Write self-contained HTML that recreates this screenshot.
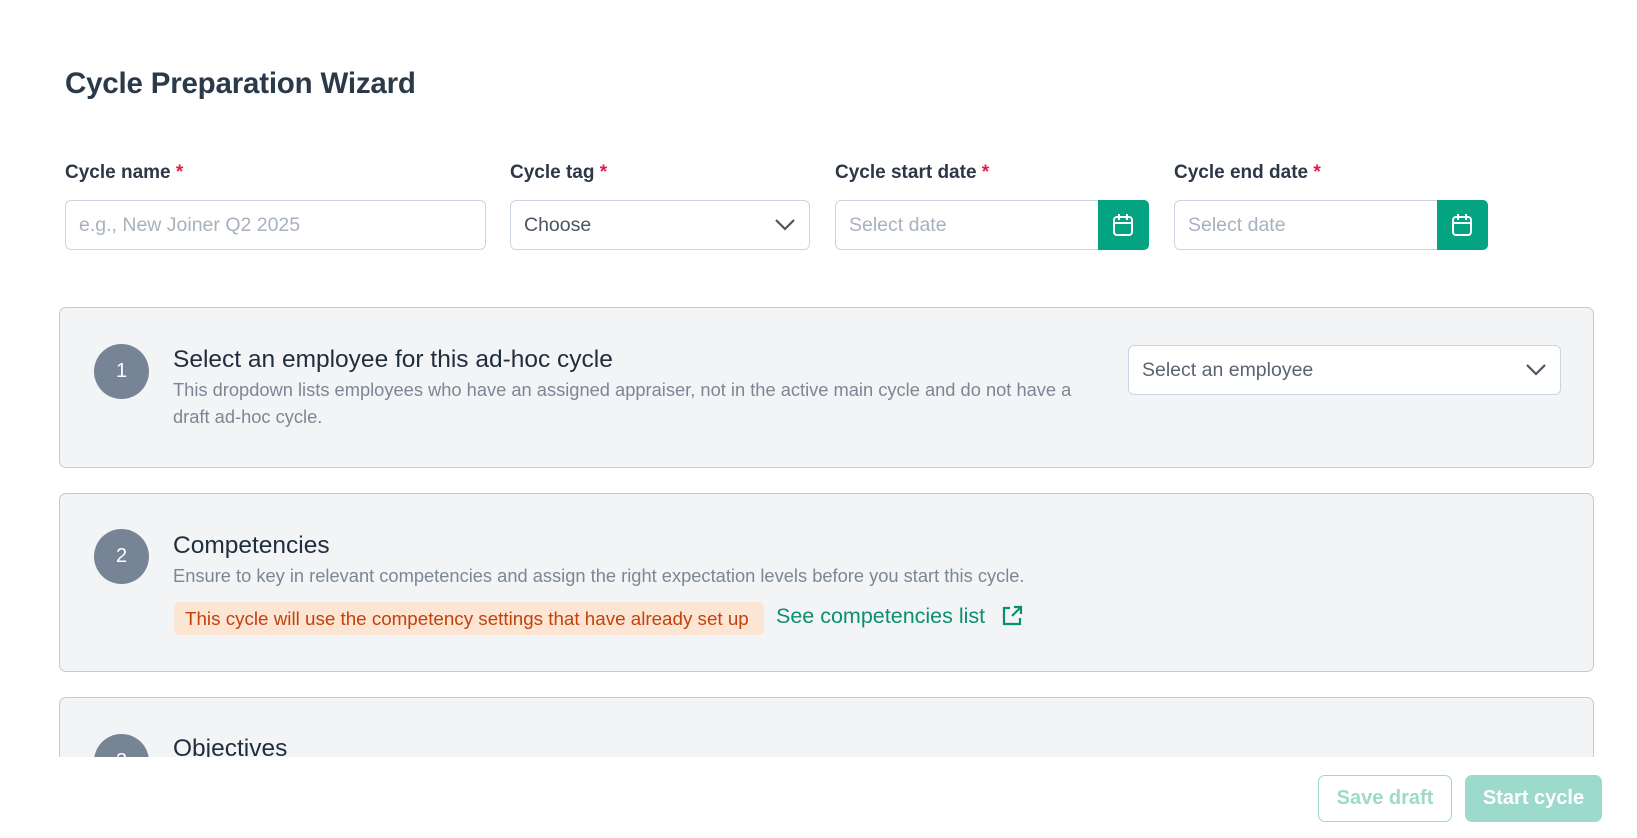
<!DOCTYPE html>
<html><head><meta charset="utf-8"><style>
*{box-sizing:border-box;margin:0;padding:0}
body{width:1637px;height:838px;overflow:hidden;background:#fff;font-family:"Liberation Sans",sans-serif;position:relative;color:#2d3748}
.abs{position:absolute}
h1{position:absolute;left:65px;top:67px;font-size:29.5px;font-weight:bold;color:#2b3a4a;letter-spacing:-0.2px}
.lbl{position:absolute;top:162px;font-size:19px;font-weight:bold;color:#2d3748}
.lbl span{color:#e11d48}
.inp{position:absolute;top:200px;height:50px;border:1px solid #cbd5e1;border-radius:6px;background:#fff;font-size:19.5px;color:#a7b1bf;padding-left:13px;line-height:48px}
.cal{position:absolute;top:200px;height:50px;width:51px;background:#04a381;border-radius:0 5px 5px 0}
.card{position:absolute;left:59px;width:1535px;background:#f3f4f6;border:1px solid #c3cbd6;border-radius:7px}
.circ{position:absolute;left:94px;width:55px;height:55px;border-radius:50%;background:#768496;color:#fff;font-size:20px;text-align:center;line-height:55px}
.ct{position:absolute;left:173px;font-size:24.5px;color:#1f2d3d}
.cd{position:absolute;left:173px;font-size:18.3px;color:#7b8794;line-height:27px}
.chev{position:absolute}
</style></head><body>
<h1>Cycle Preparation Wizard</h1>
<div class="lbl" style="left:65px">Cycle name <span>*</span></div>
<div class="lbl" style="left:510px">Cycle tag <span>*</span></div>
<div class="lbl" style="left:835px">Cycle start date <span>*</span></div>
<div class="lbl" style="left:1174px">Cycle end date <span>*</span></div>
<div class="inp" style="left:65px;width:421px">e.g., New Joiner Q2 2025</div>
<div class="inp" style="left:510px;width:300px;color:#4a5563">Choose</div>
<svg class="chev" style="left:774px;top:218px" width="22" height="14" viewBox="0 0 22 14"><path d="M2 2l9 9 9-9" fill="none" stroke="#4a5563" stroke-width="2.2"/></svg>
<div class="inp" style="left:835px;width:314px">Select date</div>
<div class="cal" style="left:1098px"></div>
<div class="inp" style="left:1174px;width:314px">Select date</div>
<div class="cal" style="left:1437px"></div>
<svg class="abs" style="left:1112px;top:213px" width="22" height="24" viewBox="0 0 22 24"><rect x="2" y="4" width="18" height="18" rx="3" fill="none" stroke="#fff" stroke-width="2"/><path d="M2 10h18M7 1v6M15 1v6" stroke="#fff" stroke-width="2"/></svg>
<svg class="abs" style="left:1451px;top:213px" width="22" height="24" viewBox="0 0 22 24"><rect x="2" y="4" width="18" height="18" rx="3" fill="none" stroke="#fff" stroke-width="2"/><path d="M2 10h18M7 1v6M15 1v6" stroke="#fff" stroke-width="2"/></svg>

<div class="card" style="top:307px;height:161px"></div>
<div class="circ" style="top:344px">1</div>
<div class="ct" style="top:346px">Select an employee for this ad-hoc cycle</div>
<div class="cd" style="top:376px;width:915px">This dropdown lists employees who have an assigned appraiser, not in the active main cycle and do not have a draft ad-hoc cycle.</div>
<div class="inp" style="left:1128px;top:345px;width:433px;color:#5a6472">Select an employee</div>
<svg class="chev" style="left:1525px;top:363px" width="22" height="14" viewBox="0 0 22 14"><path d="M2 2l9 9 9-9" fill="none" stroke="#4a5563" stroke-width="2.2"/></svg>

<div class="card" style="top:493px;height:179px"></div>
<div class="circ" style="top:529px">2</div>
<div class="ct" style="top:532px">Competencies</div>
<div class="cd" style="top:562px">Ensure to key in relevant competencies and assign the right expectation levels before you start this cycle.</div>
<div class="abs" style="left:174px;top:602px;width:590px;height:33px;background:#fde5d4;border-radius:5px;color:#c2410c;font-size:18.8px;line-height:33px;padding-left:11px;white-space:nowrap">This cycle will use the competency settings that have already set up</div>
<div class="abs" style="left:776px;top:604px;font-size:21.5px;color:#0a8f6f">See competencies list</div>
<svg class="abs" style="left:1001px;top:605px" width="22" height="22" viewBox="0 0 22 22"><path d="M9 3H3v16h16v-6M13 2h7v7M20 2l-9 9" fill="none" stroke="#0a8f6f" stroke-width="2.2"/></svg>

<div class="card" style="top:697px;height:120px"></div>
<div class="circ" style="top:734px">3</div>
<div class="ct" style="top:735px">Objectives</div>
<div class="abs" style="left:0;top:757px;width:1637px;height:81px;background:#fff"></div>
<div class="abs" style="left:1318px;top:775px;width:134px;height:47px;border:1px solid #9ed9ca;border-radius:7px;color:#9ed9ca;font-size:20px;font-weight:bold;text-align:center;line-height:45px">Save draft</div>
<div class="abs" style="left:1465px;top:775px;width:137px;height:47px;background:#9cdacb;border-radius:7px;color:#fff;font-size:20px;font-weight:bold;text-align:center;line-height:47px">Start cycle</div>
</body></html>
